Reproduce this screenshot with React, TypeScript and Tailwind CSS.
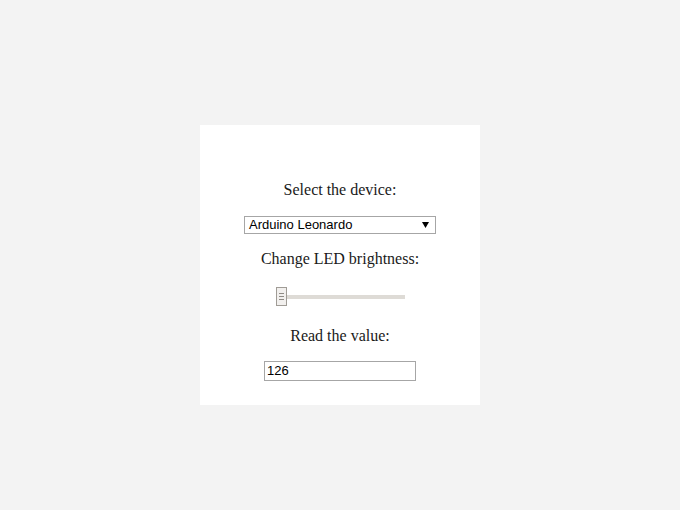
import React from "react";

export default function App() {
  return (
    <div className="w-[680px] h-[510px] bg-[#f3f3f3] pt-[125px] overflow-hidden">
      <div
        className="mx-auto w-[280px] h-[280px] bg-white flex flex-col items-center pt-[56px] text-[16px] leading-[18px] text-[#1a1a1a]"
        style={{ fontFamily: '"Liberation Serif", "Times New Roman", serif' }}
      >
        <div className="h-[18px]">Select the device:</div>
        <div
          className="mt-[17px] w-[192px] h-[18px] border border-[#a6a6a6] bg-white flex items-center justify-between pl-[4px] pr-[6px] text-[13px] leading-[16px] text-black"
          style={{ fontFamily: '"Liberation Sans", Arial, sans-serif' }}
        >
          <span>Arduino Leonardo</span>
          <svg width="7" height="6" viewBox="0 0 7 6">
            <polygon points="0,0 7,0 3.5,6" fill="#000" />
          </svg>
        </div>
        <div className="mt-[16px] h-[18px]">Change LED brightness:</div>
        <div className="mt-[19px] w-[129px] h-[19px] flex items-center">
          <div className="w-[11px] h-[19px] border border-[#a09c96] bg-[#f2f0ee] flex flex-col items-center justify-center gap-[2px]">
            <div className="w-[5px] h-px bg-[#8f8b86]" />
            <div className="w-[5px] h-px bg-[#8f8b86]" />
            <div className="w-[5px] h-px bg-[#8f8b86]" />
          </div>
          <div className="flex-1 h-[4px] bg-[#dedbd6]" />
        </div>
        <div className="mt-[21px] h-[18px]">Read the value:</div>
        <div
          className="mt-[16px] w-[152px] h-[20px] border border-[#a6a6a6] bg-white flex items-center pl-[2px] text-[13px] leading-[16px] text-black"
          style={{ fontFamily: '"Liberation Sans", Arial, sans-serif' }}
        >
          126
        </div>
      </div>
    </div>
  );
}
